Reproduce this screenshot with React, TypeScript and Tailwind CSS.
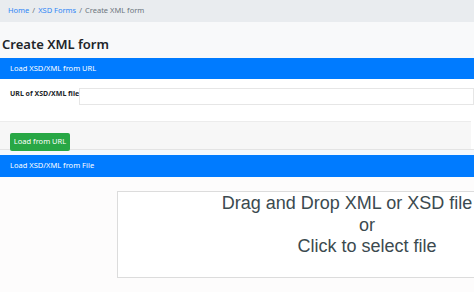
import React from 'react';

const App: React.FC = () => {
  return (
    <div className="w-[474px] h-[292px] overflow-hidden bg-[#f8f9fa] font-['Noto_Sans','Open_Sans',sans-serif] text-[#212529]">
      {/* Breadcrumb */}
      <div className="h-[22px] bg-[#e9ecef] flex items-center pl-[8px] text-[7.5px] leading-none">
        <span className="text-[#2f86f6]">Home</span>
        <span className="mx-[3px] text-[#6c757d]">/</span>
        <span className="text-[#2f86f6]">XSD Forms</span>
        <span className="mx-[3px] text-[#6c757d]">/</span>
        <span className="text-[#6c757d]">Create XML form</span>
      </div>

      <h1 className="pt-[14px] pb-[6px] pl-[2px] text-[13px] leading-[16px] font-semibold text-[#212529]">
        Create XML form
      </h1>

      {/* URL card */}
      <div className="bg-white border-b border-[#e4e4e4]">
        <div className="h-[21px] bg-[#007bff] flex items-center pl-[10px] text-[7.5px] text-white">
          Load XSD/XML from URL
        </div>
        <div className="h-[42px] flex items-start pt-[9px]">
          <label className="w-[79px] shrink-0 pl-[10px] pt-[1px] whitespace-nowrap text-[7px] leading-[10px] font-bold text-[#212529]">
            URL of XSD/XML file
          </label>
          <div className="flex-1 h-[17px] border border-[#e6e6e6] bg-white" />
        </div>
        <div className="h-[28px] bg-[#f7f7f7] border-t border-[#ececec] mr-[3px] px-[10px] pt-[4px]">
          <button className="h-[18px] w-[60px] bg-[#28a745] rounded-[2px] text-white text-[7.5px] leading-none">
            Load from URL
          </button>
        </div>
      </div>

      <div className="h-[5px] bg-[#f4f8fd]" />

      {/* File card */}
      <div className="h-[22px] bg-[#007bff] flex items-center pl-[10px] text-[7.5px] text-white">
        Load XSD/XML from File
      </div>
      <div className="pt-[14px] bg-[#fdfcfc] h-[200px]">
        <div className="ml-[117px] w-[500px] h-[87px] border border-[#dcdcdc] bg-white pt-[1px] text-center font-['Liberation_Sans',Arial,sans-serif] text-[18px] leading-[21.5px] text-[#3b4a4f]">
          <div className="pr-[40px]">Drag and Drop XML or XSD file</div>
          <div>or</div>
          <div>Click to select file</div>
        </div>
      </div>
    </div>
  );
};

export default App;
